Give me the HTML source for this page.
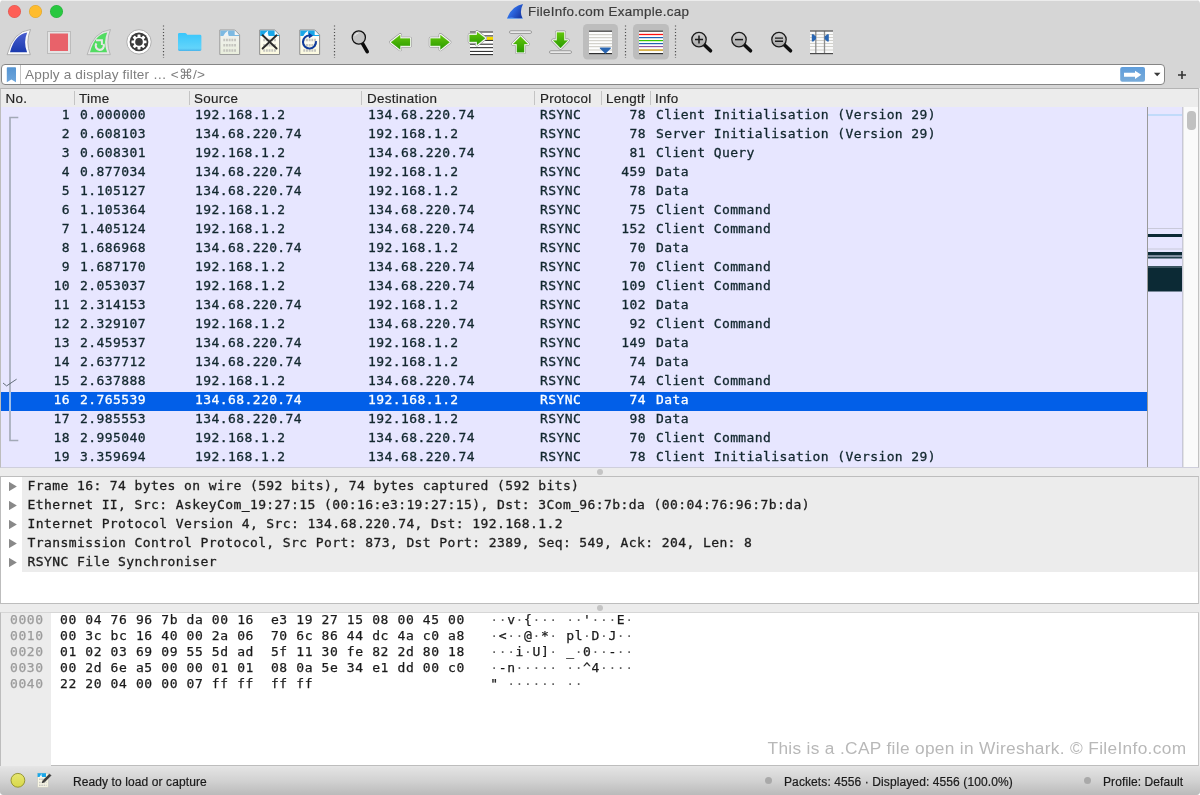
<!DOCTYPE html>
<html lang="en">
<head>
<meta charset="utf-8">
<title>FileInfo.com Example.cap</title>
<style>
html,body{margin:0;padding:0;}
body{width:1200px;height:795px;overflow:hidden;background:#fff;position:relative;
  font-family:"Liberation Sans",sans-serif;font-size:13px;color:#262626;}
*{box-sizing:border-box;}
.abs{position:absolute;}
#win{position:absolute;left:0;top:0;width:1200px;height:795px;background:#d6d6d6;overflow:hidden;will-change:transform;border-radius:4px;}
#topline{position:absolute;left:0;top:0;width:1200px;height:1px;background:#ececec;}
.tl{position:absolute;top:5px;width:13px;height:13px;border-radius:50%;box-shadow:inset 0 0 0 0.6px rgba(0,0,0,0.13);}
#title{position:absolute;left:528px;top:4px;height:16px;line-height:16px;font-size:13.4px;color:#3d3d3d;white-space:nowrap;letter-spacing:0.3px;-webkit-text-stroke:0.2px #3d3d3d;}
/* toolbar */
#tb{position:absolute;left:0;top:22px;width:1200px;height:41px;}
.ic{position:absolute;top:0;width:40px;height:40px;}
.sep{position:absolute;top:4px;width:0;height:33px;border-left:1px dotted #8e8e8e;}
.pressed{position:absolute;top:2px;width:36px;height:37px;background:#c2c2c2;border-radius:4px;}
#tbline{position:absolute;left:0;top:63px;width:1200px;height:1px;background:#b4b4b4;}
/* filter */
#filter{position:absolute;left:1px;top:64px;width:1164px;height:21px;background:#fff;border:1px solid #858585;border-radius:4px;}
#filter .ph{position:absolute;left:23px;top:1px;line-height:18px;font-size:13.6px;color:#7e7e7e;white-space:nowrap;letter-spacing:0.15px;}
#filter .vs{position:absolute;left:18px;top:0;width:1px;height:19px;background:#c4c4c4;}
#plus{position:absolute;left:1176px;top:65px;width:12px;height:18px;line-height:18px;font-size:16px;color:#333;}
/* packet list */
#pl{position:absolute;left:0;top:88px;width:1199px;height:380px;background:#ececec;border-left:1px solid #bdbdbd;border-top:1px solid #b4b4b4;border-right:1px solid #c2c2c2;border-bottom:1px solid #cfcfdc;}
#hdr{position:absolute;left:0;top:0;width:1197px;height:18px;background:#ececec;}
#hdr span{position:absolute;top:1px;line-height:18px;height:17px;font-size:13.4px;color:#222;white-space:nowrap;letter-spacing:0.3px;-webkit-text-stroke:0.15px #222;}
#hdr i{position:absolute;top:2px;width:1px;height:14px;background:#c4c4c4;}
#rows{position:absolute;left:0;top:18px;width:1146px;height:360px;overflow:hidden;background:#e7e6ff;}
.mono{font-family:"DejaVu Sans Mono","Liberation Mono",monospace;font-size:13px;letter-spacing:0.41px;}
.r{position:relative;height:19px;width:1146px;background:#e7e6ff;color:#12272e;font-family:"DejaVu Sans Mono","Liberation Mono",monospace;font-size:13px;letter-spacing:0.41px;line-height:15px;white-space:pre;}
.r{-webkit-text-stroke:0.3px #12272e;}
.r.sel{background:#025fe8;color:#fff;-webkit-text-stroke:0.3px #fff;}
.d{-webkit-text-stroke:0.3px #1d1d1d;}
.h{-webkit-text-stroke:0.25px #1a1a1a;}
.h .off{-webkit-text-stroke:0.25px #9b9b9b;}
.c{position:absolute;top:0;height:19px;}
.no{left:0;width:69px;text-align:right;}
.tm{left:79px;}
.sr{left:194px;}
.ds{left:367px;}
.pr{left:539px;}
.ln{left:590px;width:55px;text-align:right;}
.inf{left:655px;}
#mini{position:absolute;left:1146px;top:18px;width:36px;height:360px;background:#e7e6ff;border-left:1px solid #9a9a9a;border-right:1px solid #c8c8d8;}
#vscroll{position:absolute;left:1182px;top:18px;width:15px;height:360px;background:#fafafa;border-left:1px solid #e4e4e4;}
#thumb{position:absolute;left:1186px;top:22px;width:9px;height:19px;border-radius:4px;background:#c1c1c1;}
/* details */
#dt{position:absolute;left:0;top:476px;width:1199px;height:128px;border-right:1px solid #c6c6c6;background:#fff;border-left:1px solid #bdbdbd;border-top:1px solid #bdbdbd;border-bottom:1px solid #bdbdbd;}
.d{position:relative;height:19px;margin-left:21px;background:#ececec;color:#1d1d1d;font-family:"DejaVu Sans Mono","Liberation Mono",monospace;font-size:13px;letter-spacing:0.41px;line-height:19px;white-space:pre;}
.d span{position:absolute;left:5.5px;top:-1px;}
.tri{position:absolute;left:-13.2px;top:4.8px;width:8px;height:9.4px;background:#898989;clip-path:polygon(0 0,100% 50%,0 100%);}
/* hex */
#hx{position:absolute;left:0;top:612px;width:1199px;height:154px;border-top:1px solid #d6d6d6;border-right:1px solid #c6c6c6;background:#fff;border-left:1px solid #bdbdbd;border-bottom:1px solid #bdbdbd;}
#hxoff{position:absolute;left:0;top:0;width:50px;height:153px;background:#ececec;}
.h{position:absolute;left:0;height:16px;line-height:16px;font-family:"DejaVu Sans Mono","Liberation Mono",monospace;font-size:13px;letter-spacing:0.61px;white-space:pre;color:#1a1a1a;}
.h .off{position:absolute;left:9px;color:#9b9b9b;}
.h .hx{position:absolute;left:59px;}
.h i{font-style:normal;color:#5c5c5c;-webkit-text-stroke:0;}
#wm{position:absolute;left:767.5px;top:738px;font-size:17.3px;line-height:20px;color:#b8b8b8;white-space:nowrap;letter-spacing:0.33px;}
/* status */
#sb{position:absolute;left:0;top:766px;width:1200px;height:29px;background:linear-gradient(#e6e6e6 0,#e2e2e2 2px,#d2d2d2 50%,#bababa 100%);}
#sb span{position:absolute;top:8px;line-height:16px;font-size:12px;color:#1a1a1a;white-space:nowrap;letter-spacing:0.1px;-webkit-text-stroke:0.2px #1a1a1a;}
.grip{position:absolute;width:7px;height:7px;border-radius:50%;background:#a9a9a9;}
</style>
</head>
<body>
<div id="win">
<div id="topline"></div>
<div class="tl" style="left:8px;background:#fe5f57;"></div>
<div class="tl" style="left:29px;background:#febc2e;"></div>
<div class="tl" style="left:50px;background:#28c840;"></div>
<svg class="abs" style="left:505px;top:2px" width="20" height="19" viewBox="505 2 20 19">
<defs><linearGradient id="gT" x1="0" y1="0" x2="1" y2="0.6"><stop offset="0" stop-color="#4f9af6"/><stop offset="0.55" stop-color="#2a63dc"/><stop offset="1" stop-color="#1a3ca8"/></linearGradient></defs>
<path d="M523 3.9Q511.5 6 507 18.6H522.6Q519 12 523 3.9z" fill="url(#gT)"/>
<path d="M507 18.6q4-1.6 7.8-0.6t7.8-0.2v1.2H507z" fill="#6aa6f2" opacity="0.8"/>
</svg>
<div id="title">FileInfo.com Example.cap</div>
<div id="tb">
<svg class="abs" style="left:0;top:-22px" width="1200" height="64" viewBox="0 0 1200 64">
<defs>
  <linearGradient id="gBlue" x1="0" y1="0" x2="0" y2="1"><stop offset="0" stop-color="#4a5fd0"/><stop offset="1" stop-color="#1a3aae"/></linearGradient>
  <linearGradient id="gGreenFin" x1="0" y1="0" x2="0" y2="1"><stop offset="0" stop-color="#4ad85a"/><stop offset="1" stop-color="#5be06a"/></linearGradient>
  <linearGradient id="gArrow" x1="0" y1="0" x2="0" y2="1"><stop offset="0" stop-color="#62c60c"/><stop offset="1" stop-color="#2a9a00"/></linearGradient>
  <linearGradient id="gFolder" x1="0" y1="0" x2="0" y2="1"><stop offset="0" stop-color="#39c6fb"/><stop offset="0.85" stop-color="#62d4fb"/><stop offset="1" stop-color="#4ab4ea"/></linearGradient>
  <linearGradient id="gPaper" x1="0" y1="0" x2="0" y2="1"><stop offset="0" stop-color="#ffffff"/><stop offset="1" stop-color="#fbf9de"/></linearGradient>
  <linearGradient id="gPaper2" x1="0" y1="0" x2="0" y2="1"><stop offset="0" stop-color="#f2f2f2"/><stop offset="1" stop-color="#e9eedc"/></linearGradient>
  <linearGradient id="gLens" x1="0" y1="0" x2="0" y2="1"><stop offset="0" stop-color="#d0d0d0"/><stop offset="1" stop-color="#a8a8a8"/></linearGradient>
  <path id="finO" d="M30.5 29.5Q13 31.5 7.1 54.7H30.3Q25.3 42 30.5 29.5z"/><path id="finI" d="M27.2 32.5Q14.5 34.5 10 52.2H27.1Q23 42.2 27.2 32.5z"/>
  <g id="bits" fill="none" stroke="#c4c4be" stroke-width="2.4" stroke-dasharray="1.9 0.8"><path d="M4 10.5h13M4 15.8h13M4 21h13"/></g>
  <g id="zoomglass">
    <path d="M5.2 5.2L11.5 11.2" stroke="#111" stroke-width="3.6" stroke-linecap="round"/>
    <circle cx="0" cy="0" r="7.2" fill="url(#gLens)" stroke="#1c1c1c" stroke-width="1.3"/>
  </g>
</defs>

<!-- 1 start capture : blue fin -->
<g>
  <use href="#finO" fill="#fafafa" stroke="#a6a6a6" stroke-width="0.9" stroke-linejoin="round"/>
  <use href="#finI" fill="url(#gBlue)"/>
</g>
<!-- 2 stop : red square -->
<rect x="47.5" y="31.5" width="23" height="22" fill="#e4e4e4" stroke="#bcbcbc" stroke-width="1"/>
<rect x="50" y="33.5" width="18" height="17.5" fill="#e8626a"/>
<!-- 3 restart : green fin -->
<g transform="translate(80,0)">
  <use href="#finO" fill="#e4e4e4" stroke="#b0b0b0" stroke-width="0.9" stroke-linejoin="round"/>
  <use href="#finI" fill="#52dc62"/>
  <path d="M16.4 43.4A4.1 4.1 0 1 0 23.5 44" fill="none" stroke="#e6e6e6" stroke-width="2.2"/>
  <path d="M16 40.3h5.9v4.6" fill="none" stroke="#e6e6e6" stroke-width="2"/>
</g>
<!-- 4 options : gear -->
<g transform="translate(139,41.9)">
  <circle r="12.2" fill="#fff" stroke="#a8a8a8" stroke-width="0.9"/>
  <circle r="9.4" fill="#3b3b3b"/>
  <g fill="#fff">
    <circle r="5.5"/>
    <g id="teeth">
      <rect x="-1.45" y="-7.5" width="2.9" height="15" rx="0.4"/>
      <rect x="-1.45" y="-7.5" width="2.9" height="15" rx="0.4" transform="rotate(45)"/>
      <rect x="-1.45" y="-7.5" width="2.9" height="15" rx="0.4" transform="rotate(90)"/>
      <rect x="-1.45" y="-7.5" width="2.9" height="15" rx="0.4" transform="rotate(135)"/>
    </g>
  </g>
  <circle r="3.8" fill="#3b3b3b"/>
</g>
<!-- separators -->
<g stroke="#4c4c4c" stroke-width="1.2" stroke-dasharray="1.1 2.1">
  <path d="M163.5 25.5V58"/><path d="M334.5 25.5V58"/><path d="M625.5 25.5V58"/><path d="M675.5 25.5V58"/>
</g>
<!-- 5 open : folder -->
<path d="M178 34.3a1.4 1.4 0 0 1 1.4-1.4h5.6q0.9 0 1.5 0.9l0.7 1h12.8a1.4 1.4 0 0 1 1.4 1.4v13.3a1.4 1.4 0 0 1-1.4 1.4H179.4a1.4 1.4 0 0 1-1.4-1.4z" fill="url(#gFolder)"/>
<!-- 6 save : file -->
<g transform="translate(219.3,29.5)">
  <path d="M0.5 0.5H15.5L20.3 5.3V25H0.5z" fill="url(#gPaper2)" stroke="#9c9c9c" stroke-width="1"/>
  <path d="M1 1H15.3L19.8 5.5V6.6H1z" fill="#7cb9e2"/>
  <path d="M9 1Q5.2 3.2 4 6.6H9.5Q7.8 3.6 9 1z" fill="#eef3f6"/>
  <path d="M15.4 1v4.4h4.4z" fill="#f4f4f4"/>
  <use href="#bits"/>
</g>
<!-- 7 close : file + X -->
<g transform="translate(259.2,29.5)">
  <path d="M0.5 0.5H15.5L20.3 5.3V25H0.5z" fill="url(#gPaper)" stroke="#8c8c8c" stroke-width="1"/>
  <path d="M1 1H15.3L19.8 5.5V6.6H1z" fill="#18a6e8"/>
  <path d="M9 1Q5.2 3.2 4 6.6H9.5Q7.8 3.6 9 1z" fill="#f6fbff"/>
  <path d="M15.4 1v4.4h4.4z" fill="#fafafa"/>
  <use href="#bits"/>
  <path d="M3.4 5.8L17.4 19M17.4 5.8L3.4 19" stroke="#2a2a2a" stroke-width="1.9" stroke-linecap="round"/>
</g>
<!-- 8 reload : file + circular arrow -->
<g transform="translate(299.3,29.5)">
  <path d="M0.5 0.5H15.5L20.3 5.3V25H0.5z" fill="url(#gPaper)" stroke="#8c8c8c" stroke-width="1"/>
  <path d="M1 1H15.3L19.8 5.5V6.6H1z" fill="#18a6e8"/>
  <path d="M9 1Q5.2 3.2 4 6.6H9.5Q7.8 3.6 9 1z" fill="#f6fbff"/>
  <path d="M15.4 1v4.4h4.4z" fill="#fafafa"/>
  <use href="#bits"/>
  <path d="M16.6 11.6A6.5 6.5 0 1 1 10.6 6" fill="none" stroke="#0f3c9c" stroke-width="2.1"/>
  <path d="M9.6 3.2L13.8 6.2 9.6 9z" fill="#0f3c9c"/>
</g>
<!-- 9 find : magnifier -->
<g>
  <path d="M362.6 43.6L367.2 51.6" stroke="#0c0c0c" stroke-width="3.6" stroke-linecap="round"/>
  <circle cx="358.8" cy="37.5" r="6.6" fill="#c4c4c4" stroke="#111" stroke-width="1.3"/>
  <path d="M354.6 36A4.4 4.4 0 0 1 358.4 33.2" fill="none" stroke="#efefef" stroke-width="0.9"/>
</g>
<!-- 10 back -->
<g stroke-linejoin="round">
  <path id="arrL" d="M391 42.2L400.2 35V38.5H410V45.8H400.2V49.4z" fill="none" stroke="#8e8e8e" stroke-width="3.6"/>
  <path d="M391 42.2L400.2 35V38.5H410V45.8H400.2V49.4z" fill="#fbfbfb" stroke="#fbfbfb" stroke-width="2.5"/>
  <path d="M391 42.2L400.2 35V38.5H410V45.8H400.2V49.4z" fill="url(#gArrow)" stroke="url(#gArrow)" stroke-width="0.3"/>
</g>
<!-- 11 forward -->
<g stroke-linejoin="round">
  <path d="M449.6 42.2L440.4 35V38.5H430.6V45.8H440.4V49.4z" fill="none" stroke="#8e8e8e" stroke-width="3.6"/>
  <path d="M449.6 42.2L440.4 35V38.5H430.6V45.8H440.4V49.4z" fill="#fbfbfb" stroke="#fbfbfb" stroke-width="2.5"/>
  <path d="M449.6 42.2L440.4 35V38.5H430.6V45.8H440.4V49.4z" fill="url(#gArrow)" stroke="url(#gArrow)" stroke-width="0.3"/>
</g>
<!-- 12 goto -->
<g>
  <rect x="470" y="31.5" width="23" height="23.5" fill="#fff"/>
  <rect x="487" y="36.8" width="6" height="3.2" fill="#f6dd00"/>
  <path d="M470 32h23M470 35.9h23M470 40.4h23M470 44.2h23M470 47.7h23M470 51.4h23M470 54.6h23" stroke="#1e1e1e" stroke-width="1"/>
  <g stroke-linejoin="round">
    <path d="M485.2 38.3L477 32V35H469.6V41.7H477V44.7z" fill="none" stroke="#8e8e8e" stroke-width="3.6"/>
    <path d="M485.2 38.3L477 32V35H469.6V41.7H477V44.7z" fill="#fbfbfb" stroke="#fbfbfb" stroke-width="2.5"/>
  <path d="M485.2 38.3L477 32V35H469.6V41.7H477V44.7z" fill="url(#gArrow)" stroke="url(#gArrow)" stroke-width="0.3"/>
  </g>
</g>
<!-- 13 first -->
<g stroke-linejoin="round">
  <rect x="509.5" y="30.8" width="22" height="2.6" rx="1.3" fill="#f4f4f4" stroke="#8c8c8c" stroke-width="0.9"/>
  <path d="M520.5 36.6L527.8 44H524.1V52.2H516.9V44H513.2z" fill="none" stroke="#8e8e8e" stroke-width="3.6"/>
  <path d="M520.5 36.6L527.8 44H524.1V52.2H516.9V44H513.2z" fill="#fbfbfb" stroke="#fbfbfb" stroke-width="2.5"/>
  <path d="M520.5 36.6L527.8 44H524.1V52.2H516.9V44H513.2z" fill="url(#gArrow)" stroke="url(#gArrow)" stroke-width="0.3"/>
</g>
<!-- 14 last -->
<g stroke-linejoin="round">
  <rect x="549.5" y="50.8" width="22" height="2.6" rx="1.3" fill="#f4f4f4" stroke="#8c8c8c" stroke-width="0.9"/>
  <path d="M560.5 48L567.8 40.4H564.1V32.4H556.9V40.4H553.2z" fill="none" stroke="#8e8e8e" stroke-width="3.6"/>
  <path d="M560.5 48L567.8 40.4H564.1V32.4H556.9V40.4H553.2z" fill="#fbfbfb" stroke="#fbfbfb" stroke-width="2.5"/>
  <path d="M560.5 48L567.8 40.4H564.1V32.4H556.9V40.4H553.2z" fill="url(#gArrow)" stroke="url(#gArrow)" stroke-width="0.3"/>
</g>
<!-- 15 autoscroll (pressed) -->
<rect x="583" y="24" width="35" height="35.5" rx="4.5" fill="#bdbdbd"/>
<g>
  <rect x="589" y="31" width="23" height="23" fill="#fdfdfd"/>
  <path d="M589 34.7h23M589 37.7h23M589 40.7h23M589 43.7h23M589 46.7h23M589 50h23" stroke="#c9c8c0" stroke-width="1"/>
  <path d="M589 31.2h23" stroke="#3a3a3a" stroke-width="1.2"/>
  <path d="M589 53.6h23" stroke="#2e2e2e" stroke-width="1.2"/>
  <path d="M600.6 47.4h9.6q1.2 0.1 0.6 1.2L605.4 53.8 599.9 48.6q-0.6-1.1 0.7-1.2z" fill="#2a66b2"/>
</g>
<!-- 16 colorize (pressed) -->
<rect x="633" y="24" width="36" height="35.5" rx="4.5" fill="#bdbdbd"/>
<g>
  <rect x="639" y="31" width="24" height="23" fill="#fdfdfd"/>
  <path d="M639 31.2h24" stroke="#3a3a3a" stroke-width="1.2"/>
  <path d="M639 34.5h24" stroke="#ff1010" stroke-width="1.3"/>
  <path d="M639 37.6h24" stroke="#1f63b5" stroke-width="1.2"/>
  <path d="M639 40.6h24" stroke="#36c800" stroke-width="1.2"/>
  <path d="M639 43.6h24" stroke="#1f63b5" stroke-width="1.2"/>
  <path d="M639 46.6h24" stroke="#8a4f9c" stroke-width="1.1"/>
  <path d="M639 50.1h24" stroke="#d9b24c" stroke-width="1.9"/>
  <path d="M639 53.6h24" stroke="#2e2e2e" stroke-width="1.2"/>
</g>
<!-- 17-19 zoom -->
<g transform="translate(699,39.6)"><use href="#zoomglass"/><path d="M-4 0h8M0-4v8" stroke="#1a1a1a" stroke-width="1.5"/></g>
<g transform="translate(739,39.6)"><use href="#zoomglass"/><path d="M-4 0h8" stroke="#1a1a1a" stroke-width="1.5"/></g>
<g transform="translate(779,39.6)"><use href="#zoomglass"/><path d="M-4-1.5h8M-4 1.7h8" stroke="#1a1a1a" stroke-width="1.4"/></g>
<!-- 20 resize columns -->
<g>
  <rect x="810" y="31" width="23" height="23" fill="#f9f9f9"/>
  <path d="M810 34.5h23M810 37.5h23M810 40.5h23M810 43.5h23M810 46.5h23M810 50h23" stroke="#d2d1cb" stroke-width="1"/>
  <path d="M815.8 31V54M824.5 31V54" stroke="#8c8c8c" stroke-width="1.3"/>
  <path d="M810 31h23" stroke="#5a5a5a" stroke-width="1.3"/>
  <path d="M810 53.6h23" stroke="#4a4a4a" stroke-width="1.2"/>
  <path d="M811.8 34.2h1.6l2.6 2.3v2.6l-2.6 2.3h-1.6z" fill="#2a66b2"/>
  <path d="M828.8 34.2h-1.6l-2.6 2.3v2.6l2.6 2.3h1.6z" fill="#2a66b2"/>
</g>
</svg>

</div>
<div id="filter">
  <svg class="abs" style="left:4px;top:2px" width="11" height="16" viewBox="0 0 11 16"><defs><linearGradient id="gBm" x1="0" y1="0" x2="0" y2="1"><stop offset="0" stop-color="#5594d2"/><stop offset="1" stop-color="#6ea6dc"/></linearGradient></defs><path d="M1.6 0.3h7.6a0.8 0.8 0 0 1 .8.8V15.2l-4.6-2.6L0.8 15.2V1.1A0.8 0.8 0 0 1 1.6 0.3z" fill="url(#gBm)"/></svg>
  <div class="vs"></div>
  <div class="ph">Apply a display filter … &lt;⌘/&gt;</div>
  <svg class="abs" style="left:1118px;top:2px" width="26" height="15" viewBox="0 0 26 15"><defs><linearGradient id="gAb" x1="0" y1="0" x2="0" y2="1"><stop offset="0" stop-color="#5f9ddb"/><stop offset="1" stop-color="#78abd9"/></linearGradient></defs><rect x="0.2" y="0" width="24.8" height="14.8" rx="2" fill="url(#gAb)"/><path d="M4 5.8h11V3.8L21.3 7.8 15 11.9V9.8H4z" fill="#fff"/></svg>
  <svg class="abs" style="left:1151px;top:7px" width="9" height="5" viewBox="0 0 9 5"><path d="M0.9 0.8h6.6L4.2 4.3z" fill="#3a3a3a"/></svg>
</div>
<svg class="abs" style="left:1177px;top:70px" width="10" height="10" viewBox="0 0 10 10"><path d="M1 5h8M5 1v8" stroke="#333" stroke-width="1.6"/></svg>

<div class="abs" style="left:0;top:88px;width:1200px;height:679px;background:#ececec"></div>
<div id="pl">
  <div id="hdr">
    <span style="left:4.5px">No.</span><i style="left:73px"></i>
    <span style="left:78px">Time</span><i style="left:188px"></i>
    <span style="left:193px">Source</span><i style="left:360px"></i>
    <span style="left:366px">Destination</span><i style="left:533px"></i>
    <span style="left:539px">Protocol</span><i style="left:600px"></i>
    <span style="left:605px;width:39px;overflow:hidden;">Length</span><i style="left:649px"></i>
    <span style="left:654px">Info</span>
  </div>
  <div id="rows">
<div class="r"><span class="c no">1</span><span class="c tm">0.000000</span><span class="c sr">192.168.1.2</span><span class="c ds">134.68.220.74</span><span class="c pr">RSYNC</span><span class="c ln">78</span><span class="c inf">Client Initialisation (Version 29)</span></div>
<div class="r"><span class="c no">2</span><span class="c tm">0.608103</span><span class="c sr">134.68.220.74</span><span class="c ds">192.168.1.2</span><span class="c pr">RSYNC</span><span class="c ln">78</span><span class="c inf">Server Initialisation (Version 29)</span></div>
<div class="r"><span class="c no">3</span><span class="c tm">0.608301</span><span class="c sr">192.168.1.2</span><span class="c ds">134.68.220.74</span><span class="c pr">RSYNC</span><span class="c ln">81</span><span class="c inf">Client Query</span></div>
<div class="r"><span class="c no">4</span><span class="c tm">0.877034</span><span class="c sr">134.68.220.74</span><span class="c ds">192.168.1.2</span><span class="c pr">RSYNC</span><span class="c ln">459</span><span class="c inf">Data</span></div>
<div class="r"><span class="c no">5</span><span class="c tm">1.105127</span><span class="c sr">134.68.220.74</span><span class="c ds">192.168.1.2</span><span class="c pr">RSYNC</span><span class="c ln">78</span><span class="c inf">Data</span></div>
<div class="r"><span class="c no">6</span><span class="c tm">1.105364</span><span class="c sr">192.168.1.2</span><span class="c ds">134.68.220.74</span><span class="c pr">RSYNC</span><span class="c ln">75</span><span class="c inf">Client Command</span></div>
<div class="r"><span class="c no">7</span><span class="c tm">1.405124</span><span class="c sr">192.168.1.2</span><span class="c ds">134.68.220.74</span><span class="c pr">RSYNC</span><span class="c ln">152</span><span class="c inf">Client Command</span></div>
<div class="r"><span class="c no">8</span><span class="c tm">1.686968</span><span class="c sr">134.68.220.74</span><span class="c ds">192.168.1.2</span><span class="c pr">RSYNC</span><span class="c ln">70</span><span class="c inf">Data</span></div>
<div class="r"><span class="c no">9</span><span class="c tm">1.687170</span><span class="c sr">192.168.1.2</span><span class="c ds">134.68.220.74</span><span class="c pr">RSYNC</span><span class="c ln">70</span><span class="c inf">Client Command</span></div>
<div class="r"><span class="c no">10</span><span class="c tm">2.053037</span><span class="c sr">192.168.1.2</span><span class="c ds">134.68.220.74</span><span class="c pr">RSYNC</span><span class="c ln">109</span><span class="c inf">Client Command</span></div>
<div class="r"><span class="c no">11</span><span class="c tm">2.314153</span><span class="c sr">134.68.220.74</span><span class="c ds">192.168.1.2</span><span class="c pr">RSYNC</span><span class="c ln">102</span><span class="c inf">Data</span></div>
<div class="r"><span class="c no">12</span><span class="c tm">2.329107</span><span class="c sr">192.168.1.2</span><span class="c ds">134.68.220.74</span><span class="c pr">RSYNC</span><span class="c ln">92</span><span class="c inf">Client Command</span></div>
<div class="r"><span class="c no">13</span><span class="c tm">2.459537</span><span class="c sr">134.68.220.74</span><span class="c ds">192.168.1.2</span><span class="c pr">RSYNC</span><span class="c ln">149</span><span class="c inf">Data</span></div>
<div class="r"><span class="c no">14</span><span class="c tm">2.637712</span><span class="c sr">134.68.220.74</span><span class="c ds">192.168.1.2</span><span class="c pr">RSYNC</span><span class="c ln">74</span><span class="c inf">Data</span></div>
<div class="r"><span class="c no">15</span><span class="c tm">2.637888</span><span class="c sr">192.168.1.2</span><span class="c ds">134.68.220.74</span><span class="c pr">RSYNC</span><span class="c ln">74</span><span class="c inf">Client Command</span></div>
<div class="r sel"><span class="c no">16</span><span class="c tm">2.765539</span><span class="c sr">134.68.220.74</span><span class="c ds">192.168.1.2</span><span class="c pr">RSYNC</span><span class="c ln">74</span><span class="c inf">Data</span></div>
<div class="r"><span class="c no">17</span><span class="c tm">2.985553</span><span class="c sr">134.68.220.74</span><span class="c ds">192.168.1.2</span><span class="c pr">RSYNC</span><span class="c ln">98</span><span class="c inf">Data</span></div>
<div class="r"><span class="c no">18</span><span class="c tm">2.995040</span><span class="c sr">192.168.1.2</span><span class="c ds">134.68.220.74</span><span class="c pr">RSYNC</span><span class="c ln">70</span><span class="c inf">Client Command</span></div>
<div class="r"><span class="c no">19</span><span class="c tm">3.359694</span><span class="c sr">192.168.1.2</span><span class="c ds">134.68.220.74</span><span class="c pr">RSYNC</span><span class="c ln">78</span><span class="c inf">Client Initialisation (Version 29)</span></div>

    <svg class="abs" style="left:0;top:0" width="24" height="361" viewBox="0 0 24 361">
      <path d="M17.3 10.5H9V333.5H17.3" fill="none" stroke="#a2a9b6" stroke-width="1.6"/>
      <path d="M2 276L5.6 278.9 15.6 272.2" fill="none" stroke="#55606b" stroke-width="0.9"/>
      <path d="M9 285V304" stroke="#a6caf6" stroke-width="1.6"/>
    </svg>
  </div>
  <div id="mini">
    <svg width="34" height="361" viewBox="0 0 34 361">
      <rect x="0" y="7.5" width="34" height="1" fill="#9bd0f5"/>
      <rect x="0" y="121" width="34" height="1" fill="#c9c9da"/>
      <rect x="0" y="127" width="34" height="3" fill="#0c2a35"/>
      <rect x="0" y="141.5" width="34" height="1" fill="#c9c9da"/>
      <rect x="0" y="145" width="34" height="3.5" fill="#0c2a35"/>
      <rect x="0" y="149.5" width="34" height="2" fill="#23404c"/>
      <rect x="0" y="159" width="34" height="2" fill="#3b5560"/>
      <rect x="0" y="161" width="34" height="23.5" fill="#0c2a35"/>
    </svg>
  </div>
  <div id="vscroll"></div>
  <div id="thumb"></div>
</div>
<div class="grip" style="left:597px;top:468.5px;width:6px;height:6px;background:#c4c4c4"></div>

<div id="dt">
<div class="d"><i class="tri"></i><span>Frame 16: 74 bytes on wire (592 bits), 74 bytes captured (592 bits)</span></div>
<div class="d"><i class="tri"></i><span>Ethernet II, Src: AskeyCom_19:27:15 (00:16:e3:19:27:15), Dst: 3Com_96:7b:da (00:04:76:96:7b:da)</span></div>
<div class="d"><i class="tri"></i><span>Internet Protocol Version 4, Src: 134.68.220.74, Dst: 192.168.1.2</span></div>
<div class="d"><i class="tri"></i><span>Transmission Control Protocol, Src Port: 873, Dst Port: 2389, Seq: 549, Ack: 204, Len: 8</span></div>
<div class="d"><i class="tri"></i><span>RSYNC File Synchroniser</span></div>

</div>
<div class="grip" style="left:597px;top:604.5px;width:6px;height:6px;background:#c4c4c4"></div>

<div id="hx">
  <div id="hxoff"></div>
<div class="h" style="top:-0.90px"><span class="off">0000</span><span class="hx">00 04 76 96 7b da 00 16  e3 19 27 15 08 00 45 00   <i>··</i>v<i>·</i>{<i>···</i> <i>··</i>'<i>···</i>E<i>·</i></span></div>
<div class="h" style="top:14.97px"><span class="off">0010</span><span class="hx">00 3c bc 16 40 00 2a 06  70 6c 86 44 dc 4a c0 a8   <i>·</i>&lt;<i>··</i>@<i>·</i>*<i>·</i> pl<i>·</i>D<i>·</i>J<i>··</i></span></div>
<div class="h" style="top:30.84px"><span class="off">0020</span><span class="hx">01 02 03 69 09 55 5d ad  5f 11 30 fe 82 2d 80 18   <i>···</i>i<i>·</i>U]<i>·</i> _<i>·</i>0<i>··</i>-<i>··</i></span></div>
<div class="h" style="top:46.71px"><span class="off">0030</span><span class="hx">00 2d 6e a5 00 00 01 01  08 0a 5e 34 e1 dd 00 c0   <i>·</i>-n<i>·····</i> <i>··</i>^4<i>····</i></span></div>
<div class="h" style="top:62.58px"><span class="off">0040</span><span class="hx">22 20 04 00 00 07 ff ff  ff ff                     " <i>······</i> <i>··</i></span></div>

</div>
<div id="wm">This is a .CAP file open in Wireshark. © FileInfo.com</div>

<div id="sb">
  <svg class="abs" style="left:9px;top:5px" width="46" height="20" viewBox="9 771 46 20">
    <defs><linearGradient id="gY" x1="0" y1="0" x2="0" y2="1"><stop offset="0" stop-color="#e6e670"/><stop offset="1" stop-color="#d8d84a"/></linearGradient></defs>
    <circle cx="17.9" cy="780.3" r="6.9" fill="url(#gY)" stroke="#8e8e2a" stroke-width="0.9"/>
    <rect x="37.6" y="773.2" width="10.6" height="14" fill="#f8f6e4" stroke="#c9c9c0" stroke-width="0.6"/>
    <rect x="37.6" y="773.2" width="8.4" height="3.8" fill="#1aa6e8"/>
    <path d="M41.4 773.4q-0.9 2.2-2 3.6h2.8q-1-1.6-0.8-3.6z" fill="#f4fafe"/>
    <path d="M39 779.2h7.6M39 782.4h7.6M39 785.2h7.6" stroke="#c8c8c4" stroke-width="1.5" stroke-dasharray="1.6 0.7"/>
    <path d="M43.8 781.2L50.4 774.6" stroke="#3e3e3e" stroke-width="2.7"/>
    <path d="M49.4 773.6l2 2" stroke="#9a9a9a" stroke-width="0.9"/>
    <path d="M42 782.9l0.7-2.6 1.9 1.9z" fill="#111"/>
  </svg>
  <span style="left:73px">Ready to load or capture</span>
  <div class="grip" style="left:765px;top:11px"></div>
  <span style="left:784px">Packets: 4556 · Displayed: 4556 (100.0%)</span>
  <div class="grip" style="left:1084px;top:11px"></div>
  <span style="left:1103px">Profile: Default</span>
</div>
</div>
</body>
</html>
